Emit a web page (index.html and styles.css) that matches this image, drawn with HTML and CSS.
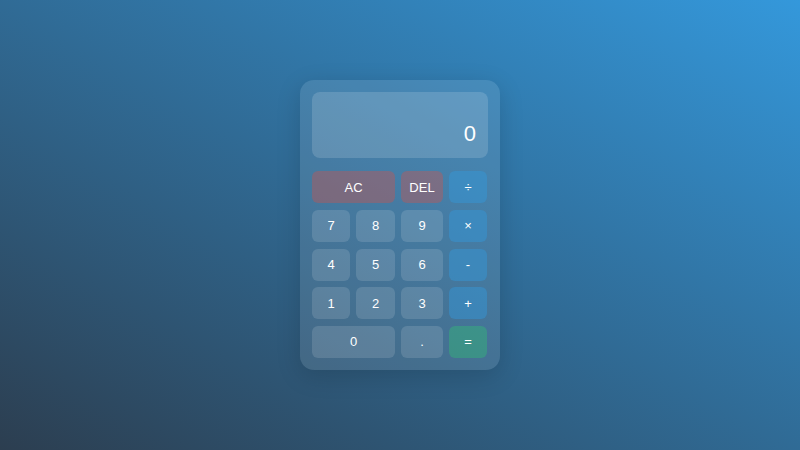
FILE: index.html
```html
<!DOCTYPE html>
<html lang="en">
<head>
    <meta charset="UTF-8">
    <meta name="viewport" content="width=device-width, initial-scale=1.0">
    <title>Calculator</title>
    <link rel="stylesheet" href="styles.css">
</head>
<body>
    <div class="calculator">
        <div class="display" id="display">0</div>

        <div class="keys">
            <button class="key key-clear key-wide">AC</button>
            <button class="key key-clear">DEL</button>
            <button class="key key-op">÷</button>

            <button class="key">7</button>
            <button class="key">8</button>
            <button class="key">9</button>
            <button class="key key-op">×</button>

            <button class="key">4</button>
            <button class="key">5</button>
            <button class="key">6</button>
            <button class="key key-op">-</button>

            <button class="key">1</button>
            <button class="key">2</button>
            <button class="key">3</button>
            <button class="key key-op">+</button>

            <button class="key key-wide">0</button>
            <button class="key">.</button>
            <button class="key key-equals">=</button>
        </div>
    </div>
</body>
</html>
```

FILE: styles.css
```css
body {
    font-family: "Liberation Sans", Arial, sans-serif;
    margin: 0;
    min-height: 100vh;
    background: linear-gradient(to top right, #2c3e50, #3498db);
    display: flex;
    justify-content: center;
    align-items: center;
}
.calculator {
    width: 176px;
    padding: 12px;
    border-radius: 14px;
    background-color: rgba(255, 255, 255, 0.1);
    box-shadow: 0 6px 24px rgba(0, 0, 0, 0.15);
}
.display {
    height: 66px;
    box-sizing: border-box;
    padding: 0 12px 11px;
    margin-bottom: 13px;
    border-radius: 8px;
    background-color: rgba(255, 255, 255, 0.15);
    color: #fff;
    font-size: 22px;
    display: flex;
    justify-content: flex-end;
    align-items: flex-end;
}
.keys {
    display: grid;
    grid-template-columns: 38px 39px 42px 38px;
    grid-auto-rows: 32px;
    gap: 6.7px 6px;
}
.key {
    border: none;
    border-radius: 6px;
    background-color: rgba(255, 255, 255, 0.13);
    color: #fff;
    font-family: inherit;
    font-size: 13px;
    cursor: pointer;
}
.key-wide {
    grid-column: span 2;
}
.key-clear {
    background-color: rgba(231, 76, 60, 0.33);
}
.key-op {
    background-color: rgba(52, 152, 219, 0.45);
}
.key-equals {
    background-color: rgba(46, 204, 113, 0.35);
}
```
